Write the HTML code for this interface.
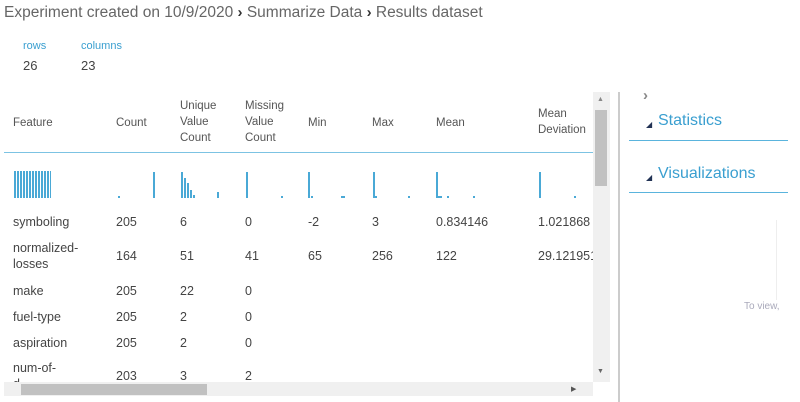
<!DOCTYPE html>
<html><head><style>
body{margin:0;width:800px;height:402px;background:#fff;font-family:"Liberation Sans",sans-serif;position:relative;overflow:hidden}
.a{position:absolute;white-space:nowrap}
.t{font-size:12.5px;color:#444;line-height:16px}
.h{font-size:11.5px;color:#555;line-height:16px}
.b{position:absolute;background:#4aa9d6;width:2px}
</style></head><body>
<div class="a" style="left:4px;top:4px;font-size:15.5px;color:#666">Experiment created on 10/9/2020 <b style="color:#333;font-size:15px">›</b> Summarize Data <b style="color:#333;font-size:15px">›</b> Results dataset</div>
<div class="a" style="left:23px;top:40px;font-size:11px;color:#3a9fd0">rows</div>
<div class="a" style="left:81px;top:40px;font-size:11px;color:#3a9fd0">columns</div>
<div class="a" style="left:23px;top:58px;font-size:13px;color:#444">26</div>
<div class="a" style="left:81px;top:58px;font-size:13px;color:#444">23</div>

<div class="a h" style="left:13px;top:115px">Feature</div>
<div class="a h" style="left:116px;top:115px">Count</div>
<div class="a h" style="left:180px;top:98px">Unique<br>Value<br>Count</div>
<div class="a h" style="left:245px;top:98px">Missing<br>Value<br>Count</div>
<div class="a h" style="left:308px;top:115px">Min</div>
<div class="a h" style="left:372px;top:115px">Max</div>
<div class="a h" style="left:436px;top:115px">Mean</div>
<div class="a h" style="left:538px;top:106px">Mean<br>Deviation</div>
<div class="a" style="left:4px;top:152px;width:589px;height:1px;background:#7cc3e3"></div>

<div class="a" style="left:14px;top:171px;width:37px;height:27px;background:repeating-linear-gradient(90deg,#4aa9d6 0 2px,#fff 2px 3px)"></div>
<div class="b" style="left:118px;top:196px;height:2px"></div>
<div class="b" style="left:153px;top:172px;height:26px"></div>
<div class="b" style="left:181px;top:172px;height:26px"></div>
<div class="b" style="left:184px;top:178px;height:20px"></div>
<div class="b" style="left:187px;top:183px;height:15px"></div>
<div class="b" style="left:190px;top:190px;height:8px"></div>
<div class="b" style="left:193px;top:195px;height:3px"></div>
<div class="b" style="left:217px;top:192px;height:6px"></div>
<div class="b" style="left:246px;top:172px;height:26px"></div>
<div class="b" style="left:281px;top:196px;height:2px"></div>
<div class="b" style="left:308px;top:172px;height:26px"></div>
<div class="b" style="left:311px;top:196px;height:2px"></div>
<div class="b" style="left:341px;top:196px;height:2px;width:4px"></div>
<div class="b" style="left:373px;top:172px;height:26px"></div>
<div class="b" style="left:375px;top:196px;height:2px"></div>
<div class="b" style="left:408px;top:196px;height:2px"></div>
<div class="b" style="left:436px;top:172px;height:26px"></div>
<div class="b" style="left:438px;top:196px;height:2px;width:4px"></div>
<div class="b" style="left:447px;top:196px;height:2px"></div>
<div class="b" style="left:473px;top:196px;height:2px"></div>
<div class="b" style="left:539px;top:172px;height:26px"></div>
<div class="b" style="left:574px;top:196px;height:2px"></div>

<div class="a t" style="left:13px;top:214px">symboling</div>
<div class="a t" style="left:116px;top:214px">205</div><div class="a t" style="left:180px;top:214px">6</div><div class="a t" style="left:245px;top:214px">0</div><div class="a t" style="left:308px;top:214px">-2</div><div class="a t" style="left:372px;top:214px">3</div><div class="a t" style="left:436px;top:214px">0.834146</div><div class="a t" style="left:538px;top:214px">1.021868</div>
<div class="a t" style="left:13px;top:240px">normalized-<br>losses</div>
<div class="a t" style="left:116px;top:248px">164</div><div class="a t" style="left:180px;top:248px">51</div><div class="a t" style="left:245px;top:248px">41</div><div class="a t" style="left:308px;top:248px">65</div><div class="a t" style="left:372px;top:248px">256</div><div class="a t" style="left:436px;top:248px">122</div><div class="a t" style="left:538px;top:248px">29.121951</div>
<div class="a t" style="left:13px;top:283px">make</div><div class="a t" style="left:116px;top:283px">205</div><div class="a t" style="left:180px;top:283px">22</div><div class="a t" style="left:245px;top:283px">0</div>
<div class="a t" style="left:13px;top:309px">fuel-type</div><div class="a t" style="left:116px;top:309px">205</div><div class="a t" style="left:180px;top:309px">2</div><div class="a t" style="left:245px;top:309px">0</div>
<div class="a t" style="left:13px;top:335px">aspiration</div><div class="a t" style="left:116px;top:335px">205</div><div class="a t" style="left:180px;top:335px">2</div><div class="a t" style="left:245px;top:335px">0</div>
<div class="a t" style="left:13px;top:360px">num-of-<br>d</div><div class="a t" style="left:116px;top:368px">203</div><div class="a t" style="left:180px;top:368px">3</div><div class="a t" style="left:245px;top:368px">2</div>
<div class="a" style="left:0;top:382px;width:610px;height:20px;background:#fff"></div>

<div class="a" style="left:593px;top:92px;width:17px;height:290px;background:#f0f0f0"></div>
<div class="a" style="left:595px;top:110px;width:12px;height:76px;background:#c1c1c1"></div>
<div class="a" style="left:597px;top:96px;font-size:7px;color:#888">▲</div>
<div class="a" style="left:597px;top:368px;font-size:7px;color:#666">▼</div>
<div class="a" style="left:4px;top:382px;width:589px;height:14px;background:#f0f0f0"></div>
<div class="a" style="left:21px;top:384px;width:186px;height:11px;background:#c1c1c1"></div>
<div class="a" style="left:571px;top:385px;font-size:7px;color:#555">▶</div>

<div class="a" style="left:618px;top:92px;width:2px;height:310px;background:#ccc"></div>
<div class="a" style="left:643px;top:87px;font-size:15px;font-weight:bold;color:#888">›</div>
<div class="a" style="left:646px;top:120px;font-size:8px;color:#235">◢</div>
<div class="a" style="left:658px;top:112px;font-size:16px;color:#3a9fd0">Statistics</div>
<div class="a" style="left:629px;top:140px;width:159px;height:1px;background:#5ab4dd"></div>
<div class="a" style="left:646px;top:173px;font-size:8px;color:#235">◢</div>
<div class="a" style="left:658px;top:165px;font-size:16px;color:#3a9fd0">Visualizations</div>
<div class="a" style="left:629px;top:192px;width:159px;height:1px;background:#5ab4dd"></div>
<div class="a" style="left:776px;top:220px;width:1px;height:80px;background:#eee"></div>
<div class="a" style="left:744px;top:301px;font-size:10px;color:#aab">To view,</div>
</body></html>
